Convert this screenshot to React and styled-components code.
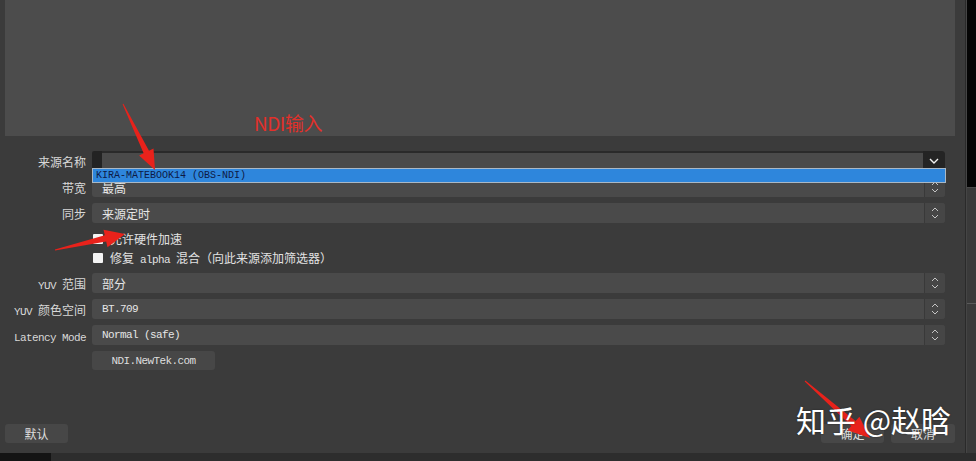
import React from 'react'
import styled, { createGlobalStyle } from 'styled-components'

const GlobalStyle = createGlobalStyle`
  html, body {
    margin: 0;
    padding: 0;
    background: #2c2c2c;
  }
  body {
    font-family: "Noto Sans CJK SC", "Noto Sans", sans-serif;
  }
`

const Screen = styled.div`
  position: relative;
  width: 976px;
  height: 461px;
  overflow: hidden;
  display: flex;
  flex-direction: column;
`

const Main = styled.div`
  display: flex;
  height: 453px;
`

const Dialog = styled.div`
  width: 965px;
  border-right: 1px solid #2a2a2a;
  background: #3b3b3b;
  display: flex;
  flex-direction: column;
`

const Side = styled.div`
  flex: 1;
  display: flex;
  flex-direction: column;
  background: #3a3a3a;
  border-left: 1px solid #454545;
`

const SideTop = styled.div`
  height: 187px;
  background: #050505;
  border-bottom: 1px solid #4a4a4a;
`

const SideLine = styled.div`
  margin-top: 115px;
  border-top: 1px solid #5a5a5a;
`

const Preview = styled.div`
  height: 136px;
  margin: 0 10px 0 5px;
  background: #4c4c4c;
`

const Form = styled.div`
  display: flex;
  flex-direction: column;
  gap: 6px;
  padding: 15px 20px 0 0;
`

const Row = styled.div`
  display: grid;
  grid-template-columns: 86px 1fr;
  column-gap: 6px;
  align-items: center;
  height: ${p => p.$h || 20}px;
`

const Label = styled.div`
  text-align: right;
  font-size: 12px;
  color: #d8d8d8;
  white-space: nowrap;
`

const Latin = styled.span`
  font-family: "Liberation Mono", monospace;
  font-size: 11px;
  letter-spacing: -0.6px;
  white-space: pre;
`

const Field = styled.div`
  position: relative;
  height: 20px;
  display: flex;
  align-items: stretch;
  background: #4a4a4a;
  border-radius: 3px;
`

const FieldText = styled.div`
  flex: 1;
  display: flex;
  align-items: center;
  padding-left: 10px;
  font-size: 12px;
  color: #e6e6e6;
  white-space: nowrap;
`

const Spin = styled.div`
  width: 20px;
  display: flex;
  align-items: center;
  justify-content: center;
  background: #464646;
  border-left: 1px solid #393939;
  border-radius: 0 3px 3px 0;
`

const ComboEdge = styled.div`
  width: 10px;
  background: #232323;
  border-radius: 2px 0 0 2px;
`

const ComboText = styled.div`
  flex: 1;
  border-top: 2px solid #2a2a2a;
`

const DropBtn = styled.div`
  width: 22px;
  display: flex;
  align-items: center;
  justify-content: center;
  background: #242424;
  border-radius: 0 3px 3px 0;
`

const Popup = styled.div`
  position: absolute;
  left: 0;
  right: -1px;
  top: 17px;
  height: 13px;
  display: flex;
  align-items: center;
  padding-left: 3px;
  background: #2e86dc;
  border: 1px solid #a9b8c6;
  color: #0d1a45;
  font-family: "Liberation Mono", monospace;
  font-size: 10px;
  z-index: 2;
`

const CheckGroup = styled.div`
  display: flex;
  flex-direction: column;
`

const CheckLine = styled.div`
  height: 19px;
  display: flex;
  align-items: center;
  gap: 7px;
  padding-left: 1px;
  font-size: 12px;
  color: #e2e2e2;
  white-space: nowrap;
`

const Box = styled.span`
  width: 10px;
  height: 10px;
  background: #f4f4f4;
  border-radius: 1px;
`

const Button = styled.div`
  width: ${p => p.$w || 63}px;
  height: 19px;
  display: flex;
  align-items: center;
  justify-content: center;
  background: #474747;
  border-radius: 3px;
  font-size: 12px;
  color: #dedede;
  white-space: nowrap;
`

const Footer = styled.div`
  margin-top: auto;
  display: flex;
  justify-content: space-between;
  padding: 0 10px 10px 5px;
`

const ButtonGroup = styled.div`
  display: flex;
  gap: 7px;
`

const BottomBar = styled.div`
  height: 8px;
  display: flex;
  background: #2d2d2d;
`

const BottomDark = styled.div`
  width: 51px;
  background: #141414;
`

const Overlay = styled.svg`
  position: absolute;
  left: 0;
  top: 0;
  pointer-events: none;
  z-index: 5;
`

const Note = styled.div`
  position: absolute;
  left: 254px;
  top: 111px;
  font-size: 19px;
  line-height: 24px;
  color: #e2302a;
  letter-spacing: -0.5px;
  z-index: 4;
`

const Watermark = styled.div`
  position: absolute;
  left: 796px;
  top: 400px;
  font-size: 30px;
  line-height: 38px;
  color: #ffffff;
  text-shadow: 0 0 2px rgba(0, 0, 0, 0.45);
  white-space: nowrap;
  z-index: 6;
`

function SpinIcon() {
  return (
    <svg width="8" height="14" viewBox="0 0 8 14">
      <path d="M1 5 L4 2 L7 5" fill="none" stroke="#c4c4c4" strokeWidth="1" />
      <path d="M1 9 L4 12 L7 9" fill="none" stroke="#c4c4c4" strokeWidth="1" />
    </svg>
  )
}

function ChevronDown() {
  return (
    <svg width="10" height="6" viewBox="0 0 10 6">
      <path d="M1 1 L5 5 L9 1" fill="none" stroke="#f2f2f2" strokeWidth="1.4" />
    </svg>
  )
}

function arrowPoints(x1, y1, x2, y2, len, head, shaft) {
  const dx = x2 - x1
  const dy = y2 - y1
  const d = Math.hypot(dx, dy)
  const ux = dx / d
  const uy = dy / d
  const nx = -uy
  const ny = ux
  const bx = x2 - ux * len
  const by = y2 - uy * len
  const pts = [
    [x1 + nx * 0.5, y1 + ny * 0.5],
    [bx + nx * shaft, by + ny * shaft],
    [bx + nx * head, by + ny * head],
    [x2, y2],
    [bx - nx * head, by - ny * head],
    [bx - nx * shaft, by - ny * shaft],
    [x1 - nx * 0.5, y1 - ny * 0.5],
  ]
  return pts.map(p => p.map(v => v.toFixed(1)).join(',')).join(' ')
}

const arrows = [
  [123, 104, 155, 170, 20, 8, 3],
  [55, 250, 125, 234, 20, 9, 3.2],
  [805, 381, 870, 438, 22, 9, 3.2],
]

function Select({ children }) {
  return (
    <Field>
      <FieldText>{children}</FieldText>
      <Spin>
        <SpinIcon />
      </Spin>
    </Field>
  )
}

export default function App() {
  return (
    <>
      <GlobalStyle />
      <Screen>
        <Main>
          <Dialog>
            <Preview />
            <Form>
              <Row>
                <Label>来源名称</Label>
                <Field>
                  <ComboEdge />
                  <ComboText />
                  <DropBtn>
                    <ChevronDown />
                  </DropBtn>
                  <Popup>KIRA-MATEBOOK14 (OBS-NDI)</Popup>
                </Field>
              </Row>
              <Row>
                <Label>带宽</Label>
                <Select>最高</Select>
              </Row>
              <Row>
                <Label>同步</Label>
                <Select>来源定时</Select>
              </Row>
              <Row $h={38}>
                <span />
                <CheckGroup>
                  <CheckLine>
                    <Box />
                    允许硬件加速
                  </CheckLine>
                  <CheckLine>
                    <Box />
                    <span>
                      修复<Latin> alpha </Latin>混合（向此来源添加筛选器）
                    </span>
                  </CheckLine>
                </CheckGroup>
              </Row>
              <Row>
                <Label>
                  <Latin>YUV </Latin>范围
                </Label>
                <Select>部分</Select>
              </Row>
              <Row>
                <Label>
                  <Latin>YUV </Latin>颜色空间
                </Label>
                <Select>
                  <Latin>BT.709</Latin>
                </Select>
              </Row>
              <Row>
                <Label>
                  <Latin>Latency Mode</Latin>
                </Label>
                <Select>
                  <Latin>Normal (safe)</Latin>
                </Select>
              </Row>
              <Row $h={19}>
                <span />
                <Button $w={123}>
                  <Latin>NDI.NewTek.com</Latin>
                </Button>
              </Row>
            </Form>
            <Footer>
              <Button>默认</Button>
              <ButtonGroup>
                <Button>确定</Button>
                <Button $w={64}>取消</Button>
              </ButtonGroup>
            </Footer>
          </Dialog>
          <Side>
            <SideTop />
            <SideLine />
          </Side>
        </Main>
        <BottomBar>
          <BottomDark />
        </BottomBar>
        <Note>NDI输入</Note>
        <Watermark>知乎 @赵晗</Watermark>
        <Overlay width="976" height="461" viewBox="0 0 976 461">
          {arrows.map((a, i) => (
            <polygon key={i} points={arrowPoints(...a)} fill="#e8221b" />
          ))}
        </Overlay>
      </Screen>
    </>
  )
}
